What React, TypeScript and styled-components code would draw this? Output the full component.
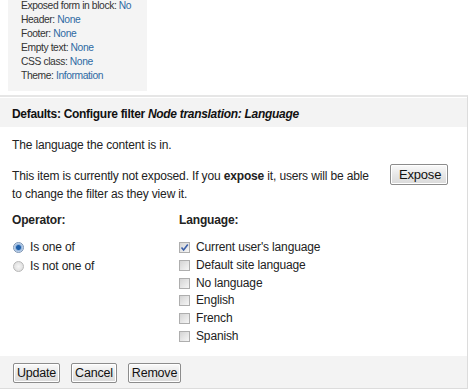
import React from "react";
import styled, { createGlobalStyle } from "styled-components";

const GlobalStyle = createGlobalStyle`
  body {
    margin: 0;
    background: #fff;
    font-family: "Liberation Sans", Arial, sans-serif;
    color: #222;
  }
`;

const Page = styled.div`
  width: 474px;
  height: 390px;
  overflow: hidden;
`;

const Summary = styled.div`
  margin-left: 8px;
  width: 139px;
  height: 92px;
  box-sizing: border-box;
  padding: 0 0 0 13px;
  background: #f4f4f4;
  font-size: 10.3px;
  letter-spacing: -0.4px;
  line-height: 14px;
  color: #333;
  margin-top: -1px;
  white-space: nowrap;
`;

const Link = styled.span`
  color: #2e6aa3;
`;

const Panel = styled.div`
  margin-top: 4px;
  width: 467px;
  border-top: 2px solid #e6e6e6;
  border-right: 1px solid #dcdcdc;
  border-bottom: 1px solid #dcdcdc;
`;

const Header = styled.div`
  background: #f3f3f3;
  height: 29px;
  margin-top: 1px;
  padding: 2px 12px 0;
  display: flex;
  align-items: center;
  box-sizing: border-box;
  font-size: 12px;
  font-weight: bold;
  letter-spacing: -0.3px;
  color: #111;
  white-space: nowrap;

  & em {
    font-style: italic;
  }
`;

const Body = styled.div`
  padding: 11px 12px 0;
  font-size: 12px;
  letter-spacing: -0.15px;
  color: #222;
`;

const Desc = styled.p`
  margin: 0;
  line-height: 15px;
`;

const ExposeRow = styled.div`
  display: flex;
  justify-content: space-between;
  align-items: flex-start;
  margin-top: 14px;
`;

const ExposeText = styled.p`
  margin: 0;
  width: 366px;
  line-height: 18px;
`;

const Button = styled.button<{ $big?: boolean }>`
  font-family: "Liberation Sans", Arial, sans-serif;
  font-size: ${(p) => (p.$big ? "13px" : "12.5px")};
  letter-spacing: -0.2px;
  color: #111;
  height: 20px;
  padding: 0 ${(p) => (p.$big ? "8px" : "3px")};
  border: 1px solid #8c8c8c;
  border-radius: 2px;
  background: linear-gradient(#fafafa, #e6e6e6 55%, #dadada);
  box-shadow: inset 0 0 0 1px #fff;
  line-height: 18px;
`;

const ExposeButton = styled(Button)`
  margin-top: -3px;
  margin-right: 7px;
  width: 58px;
  height: 21px;
`;

const Columns = styled.div`
  display: grid;
  grid-template-columns: 167px 1fr;
  margin-top: 10px;
`;

const Label = styled.div`
  font-weight: bold;
  font-size: 12px;
  line-height: 15px;
  margin-bottom: 13px;
`;

const Options = styled.div<{ $gap: number }>`
  display: flex;
  flex-direction: column;
  gap: ${(p) => p.$gap}px;
`;

const Option = styled.div`
  display: flex;
  align-items: center;
  gap: 6px;
  height: 13px;
  font-size: 12px;
  line-height: 13px;
`;

const Radio = styled.span<{ $on?: boolean }>`
  width: 11px;
  height: 11px;
  border-radius: 50%;
  box-sizing: border-box;
  border: 1px solid ${(p) => (p.$on ? "#7a93b3" : "#b8b8b8")};
  background: ${(p) =>
    p.$on
      ? "radial-gradient(circle, #1d5ea8 0 2px, #8fb2dc 3px, #e4ecf6 5px)"
      : "radial-gradient(circle, #f6f6f6, #d8d8d8)"};
  margin-left: 1px;
`;

const Check = styled.span`
  width: 11px;
  height: 11px;
  box-sizing: border-box;
  border: 1px solid #aeaeae;
  background: linear-gradient(135deg, #d4d4d4, #f6f6f6);
  display: flex;
  align-items: center;
  justify-content: center;
`;

const Footer = styled.div`
  margin-top: 13px;
  background: #f3f3f3;
  height: 32px;
  display: flex;
  align-items: center;
  gap: 11px;
  padding-left: 13px;
  padding-top: 2px;
  box-sizing: border-box;
`;

const languages = [
  "Current user's language",
  "Default site language",
  "No language",
  "English",
  "French",
  "Spanish",
];

export default function App() {
  return (
    <Page>
      <GlobalStyle />
      <Summary>
        <div>
          Exposed form in block: <Link>No</Link>
        </div>
        <div>
          Header: <Link>None</Link>
        </div>
        <div>
          Footer: <Link>None</Link>
        </div>
        <div>
          Empty text: <Link>None</Link>
        </div>
        <div>
          CSS class: <Link>None</Link>
        </div>
        <div>
          Theme: <Link>Information</Link>
        </div>
      </Summary>
      <Panel>
        <Header>
          Defaults: Configure filter&nbsp;<em>Node translation: Language</em>
        </Header>
        <Body>
          <Desc>The language the content is in.</Desc>
          <ExposeRow>
            <ExposeText>
              This item is currently not exposed. If you <b>expose</b> it,
              users will be able to change the filter as they view it.
            </ExposeText>
            <ExposeButton $big>Expose</ExposeButton>
          </ExposeRow>
          <Columns>
            <div>
              <Label>Operator:</Label>
              <Options $gap={6}>
                <Option>
                  <Radio $on />
                  Is one of
                </Option>
                <Option>
                  <Radio />
                  Is not one of
                </Option>
              </Options>
            </div>
            <div>
              <Label>Language:</Label>
              <Options $gap={4.8}>
                {languages.map((l, i) => (
                  <Option key={l}>
                    <Check>
                      {i === 0 && (
                        <svg width="9" height="9" viewBox="0 0 9 9">
                          <path
                            d="M1.5 4.5 L3.6 7 L7.8 1.5"
                            fill="none"
                            stroke="#3b5fa8"
                            strokeWidth="1.6"
                          />
                        </svg>
                      )}
                    </Check>
                    {l}
                  </Option>
                ))}
              </Options>
            </div>
          </Columns>
        </Body>
        <Footer>
          <Button>Update</Button>
          <Button>Cancel</Button>
          <Button>Remove</Button>
        </Footer>
      </Panel>
    </Page>
  );
}
